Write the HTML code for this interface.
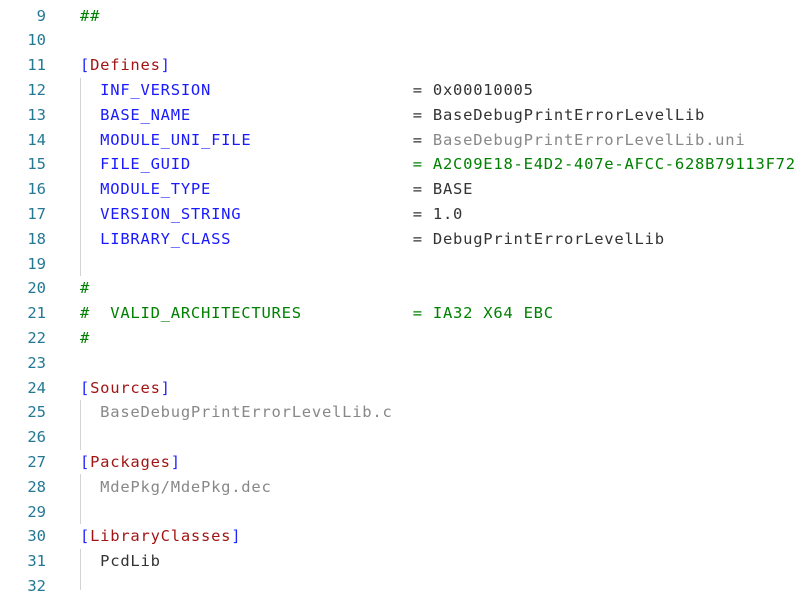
<!DOCTYPE html>
<html><head><style>
body{margin:0;width:800px;height:590px;background:#fff;overflow:hidden;position:relative;font-family:"DejaVu Sans Mono","Liberation Mono",monospace;font-size:15.5px;}
.l{position:absolute;left:0;height:24.8px;line-height:24.8px;white-space:pre;width:800px}
.n{position:absolute;right:754px;color:#237893;font-size:15.5px}
.c{position:absolute;left:80px;letter-spacing:0.75px}
.g{position:absolute;left:80px;width:1px;background:#d3d3d3}
.k{color:#1a1aff}.v{color:#333}.s{color:#888}.m{color:#008000}.b{color:#2424ff}.r{color:#a31515}
</style></head><body>
<div class="g" style="top:78px;height:198px"></div>
<div class="g" style="top:400px;height:50px"></div>
<div class="g" style="top:474px;height:50px"></div>
<div class="g" style="top:549px;height:41px"></div>
<div class="l" style="top:3.6px"><span class="n">9</span><span class="c m">##</span></div>
<div class="l" style="top:28.4px"><span class="n">10</span></div>
<div class="l" style="top:53.2px"><span class="n">11</span><span class="c"><span class="b">[</span><span class="r">Defines</span><span class="b">]</span></span></div>
<div class="l" style="top:78px"><span class="n">12</span><span class="c">  <span class="k">INF_VERSION</span>                    <span class="v">= 0x00010005</span></span></div>
<div class="l" style="top:102.8px"><span class="n">13</span><span class="c">  <span class="k">BASE_NAME</span>                      <span class="v">= BaseDebugPrintErrorLevelLib</span></span></div>
<div class="l" style="top:127.6px"><span class="n">14</span><span class="c">  <span class="k">MODULE_UNI_FILE</span>                <span class="v">= </span><span class="s">BaseDebugPrintErrorLevelLib.uni</span></span></div>
<div class="l" style="top:152.4px"><span class="n">15</span><span class="c">  <span class="k">FILE_GUID</span>                      <span class="m">= A2C09E18-E4D2-407e-AFCC-628B79113F72</span></span></div>
<div class="l" style="top:177.2px"><span class="n">16</span><span class="c">  <span class="k">MODULE_TYPE</span>                    <span class="v">= BASE</span></span></div>
<div class="l" style="top:202px"><span class="n">17</span><span class="c">  <span class="k">VERSION_STRING</span>                 <span class="v">= 1.0</span></span></div>
<div class="l" style="top:226.8px"><span class="n">18</span><span class="c">  <span class="k">LIBRARY_CLASS</span>                  <span class="v">= DebugPrintErrorLevelLib</span></span></div>
<div class="l" style="top:251.6px"><span class="n">19</span></div>
<div class="l" style="top:276.4px"><span class="n">20</span><span class="c m">#</span></div>
<div class="l" style="top:301.2px"><span class="n">21</span><span class="c m">#  VALID_ARCHITECTURES           = IA32 X64 EBC</span></div>
<div class="l" style="top:326px"><span class="n">22</span><span class="c m">#</span></div>
<div class="l" style="top:350.8px"><span class="n">23</span></div>
<div class="l" style="top:375.6px"><span class="n">24</span><span class="c"><span class="b">[</span><span class="r">Sources</span><span class="b">]</span></span></div>
<div class="l" style="top:400.4px"><span class="n">25</span><span class="c s">  BaseDebugPrintErrorLevelLib.c</span></div>
<div class="l" style="top:425.2px"><span class="n">26</span></div>
<div class="l" style="top:450px"><span class="n">27</span><span class="c"><span class="b">[</span><span class="r">Packages</span><span class="b">]</span></span></div>
<div class="l" style="top:474.8px"><span class="n">28</span><span class="c s">  MdePkg/MdePkg.dec</span></div>
<div class="l" style="top:499.6px"><span class="n">29</span></div>
<div class="l" style="top:524.4px"><span class="n">30</span><span class="c"><span class="b">[</span><span class="r">LibraryClasses</span><span class="b">]</span></span></div>
<div class="l" style="top:549.2px"><span class="n">31</span><span class="c v">  PcdLib</span></div>
<div class="l" style="top:574px"><span class="n">32</span></div>
</body></html>
